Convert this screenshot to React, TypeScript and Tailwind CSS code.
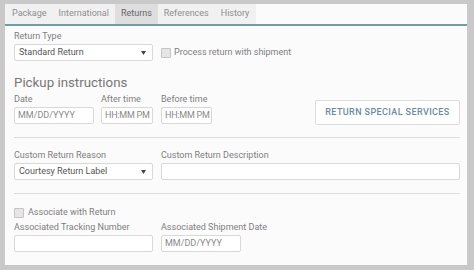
const tabs = ["Package", "International", "Returns", "References", "History"];

function Caret() {
  return (
    <svg width="5" height="4" viewBox="0 0 5 4" className="shrink-0">
      <path d="M0 0h5L2.5 4z" fill="#444" />
    </svg>
  );
}

function Select({ value, width }: { value: string; width: string }) {
  return (
    <div
      className={`${width} h-[17px] flex items-center justify-between pl-[4px] pr-[6px] bg-white border border-[#d8d8d8] rounded-[2px] text-[9px] text-[#555]`}
    >
      <span>{value}</span>
      <Caret />
    </div>
  );
}

function Input({ placeholder, width, tight }: { placeholder?: string; width: string; tight?: boolean }) {
  return (
    <div
      className={`${width} ${tight ? "tracking-[-0.25px]" : ""} h-[17px] flex items-center pl-[3px] bg-white border border-[#d8d8d8] rounded-[2px] text-[9px] text-[#8a8a8a] whitespace-nowrap overflow-hidden`}
    >
      {placeholder}
    </div>
  );
}

function Checkbox() {
  return <div className="w-[10px] h-[10px] bg-[#e6e6e6] border border-[#c4c4c4] rounded-[1px] shrink-0" />;
}

function Label({ children }: { children: React.ReactNode }) {
  return <div className="h-[11px] leading-[11px] text-[9px] text-[#7e7e7e] mb-[2px] whitespace-nowrap">{children}</div>;
}

export default function App() {
  return (
    <div
      className="w-[474px] h-[270px] bg-[#c9c9c9] pl-[5px] pt-[4px] pr-[7px] pb-[5px]"
      style={{ fontFamily: "Roboto, 'Liberation Sans', sans-serif" }}
    >
      <div className="w-full h-full bg-[#fbfbfb] flex flex-col">
        <div className="flex border-b-2 border-[#6c9eae] h-[22px]">
          <div className="flex bg-[#f1f1f1] pl-[1px] pr-[1px]">
            {tabs.map((t) => (
              <div
                key={t}
                className={`px-[6px] flex items-center text-[9px] ${
                  t === "Returns" ? "bg-[#dedede] text-[#666]" : "text-[#8e8e8e]"
                }`}
              >
                {t}
              </div>
            ))}
          </div>
        </div>

        <div className="pl-[9px] pr-[7px] pt-[5px] flex flex-col">
          <Label>Return Type</Label>
          <div className="flex items-center gap-[8px]">
            <Select value="Standard Return" width="w-[139px]" />
            <div className="flex items-center gap-[3px] text-[9px] text-[#7e7e7e]">
              <Checkbox />
              <span>Process return with shipment</span>
            </div>
          </div>

          <div className="mt-[14px] text-[13.3px] leading-[16px] text-[#777]">Pickup instructions</div>

          <div className="flex items-start justify-between mt-[3px]">
            <div className="flex gap-[7px]">
              <div>
                <Label>Date</Label>
                <Input placeholder="MM/DD/YYYY" width="w-[80px]" />
              </div>
              <div>
                <Label>After time</Label>
                <Input placeholder="HH:MM PM" width="w-[52px]" tight />
              </div>
              <div className="ml-[1px]">
                <Label>Before time</Label>
                <Input placeholder="HH:MM PM" width="w-[51px]" tight />
              </div>
            </div>
            <div className="mt-[6px] w-[145px] h-[25px] flex items-center justify-center bg-white border border-[#dcdcdc] rounded-[2px] text-[9px] font-medium tracking-[0.4px] text-[#6a8aa4]">
              RETURN SPECIAL SERVICES
            </div>
          </div>

          <div className="h-px bg-[#dcdcdc] mt-[12px]" />

          <div className="flex gap-[8px] mt-[12px]">
            <div>
              <Label>Custom Return Reason</Label>
              <Select value="Courtesy Return Label" width="w-[139px]" />
            </div>
            <div className="flex-1">
              <Label>Custom Return Description</Label>
              <Input width="w-full" />
            </div>
          </div>

          <div className="h-px bg-[#dcdcdc] mt-[13px]" />

          <div className="flex items-center gap-[4px] mt-[13px] text-[9px] text-[#7e7e7e] h-[12px]">
            <Checkbox />
            <span>Associate with Return</span>
          </div>

          <div className="flex gap-[8px] mt-[3px]">
            <div>
              <Label>Associated Tracking Number</Label>
              <Input width="w-[139px]" />
            </div>
            <div>
              <Label>Associated Shipment Date</Label>
              <Input placeholder="MM/DD/YYYY" width="w-[80px]" />
            </div>
          </div>
        </div>
      </div>
    </div>
  );
}
